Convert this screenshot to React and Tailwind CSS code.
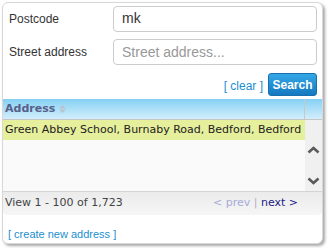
const Caret = ({ down }) => (
  <svg width="13" height="8" viewBox="0 0 13 8">
    <polyline
      points={down ? "1.5,1.5 6.5,6 11.5,1.5" : "1.5,6.5 6.5,2 11.5,6.5"}
      fill="none"
      stroke="#5a5a5a"
      strokeWidth="2.6"
    />
  </svg>
);

const App = () => {
  return (
    <div className="w-[328px] h-[248px] bg-white pl-[2px] pt-[2px] font-['Liberation_Sans',Arial,sans-serif]">
      <div className="w-[321px] h-[242px] border border-[#d8d8d8] rounded-[6px] bg-white shadow-[2px_2px_3px_rgba(0,0,0,0.35)] overflow-hidden flex flex-col">
        {/* search form */}
        <div className="px-[5px] pt-[2px]">
          <div className="flex items-center h-[27px]">
            <label className="w-[105px] pl-[1px] text-[12px] text-[#333]">Postcode</label>
            <div className="flex-1 h-[26px] border border-[#ccc] rounded-[4px] px-[8px] flex items-center text-[14px] text-[#333]">
              mk
            </div>
          </div>
          <div className="flex items-center h-[27px] mt-[6px]">
            <label className="w-[105px] pl-[1px] text-[12px] text-[#333]">Street address</label>
            <input
              placeholder="Street address..."
              className="flex-1 h-[26px] border border-[#ccc] rounded-[4px] px-[8px] text-[14px] text-[#333] placeholder:text-[#999] outline-none"
            />
          </div>
          <div className="flex items-center justify-end mt-[8px] h-[23px]">
            <a className="text-[12px] text-[#1a8fd0] mr-[5px] mt-[2px]">[ clear ]</a>
            <button className="h-[23px] w-[49px] rounded-[3px] border border-[#1670b0] bg-gradient-to-b from-[#35a8e6] to-[#1478c0] text-white text-[12px] font-bold">
              Search
            </button>
          </div>
        </div>

        {/* grid */}
        <div className="mt-[3px] flex flex-col font-['DejaVu_Sans',Verdana,sans-serif]">
          <div className="flex h-[21px] bg-gradient-to-b from-[#84d0f4] to-[#d2eefb] border-b border-[#c6c6c6]">
            <div className="flex-1 flex items-center pl-[2px] border-r border-[#c8c8c8]">
              <span className="text-[11px] font-bold text-[#56608a]">Address</span>
              <svg width="9" height="10" viewBox="0 0 9 10" className="ml-[3px]">
                <path d="M4.5 1 L8 4.5 L1 4.5 Z" fill="#b9c3cf" />
                <path d="M4.5 9 L8 5.5 L1 5.5 Z" fill="#b9c3cf" />
              </svg>
            </div>
            <div className="w-[17px]" />
          </div>
          <div className="flex h-[71px]">
            <div className="flex-1 bg-[#fafafa] flex flex-col">
              <div className="h-[20px] bg-[#e6ef9c] flex items-center pl-[2px] text-[11px] text-[#222] whitespace-nowrap overflow-hidden">
                Green Abbey School, Burnaby Road, Bedford, Bedford
              </div>
            </div>
            <div className="w-[17px] bg-[#f0f0f0] flex flex-col items-center justify-between pt-[26px] pb-[6px]">
              <Caret />
              <Caret down />
            </div>
          </div>
          <div className="flex items-center justify-between h-[24px] bg-gradient-to-b from-[#ebebeb] to-[#f6f6f6] border-t border-[#d4d4d4] pl-[2px] pr-[24px] text-[11px] rounded-b-[4px]">
            <span className="text-[#444]">View 1 - 100 of 1,723</span>
            <span>
              <span className="text-[#a8acd8]">&lt; prev</span>
              <span className="text-[#b0b0c8]"> | </span>
              <span className="text-[#1c1c86]">next &gt;</span>
            </span>
          </div>
        </div>

        <div className="pl-[5px] pt-[11px] text-[11px] text-[#1a8fd0]">[ create new address ]</div>
      </div>
    </div>
  );
};

export default App;
